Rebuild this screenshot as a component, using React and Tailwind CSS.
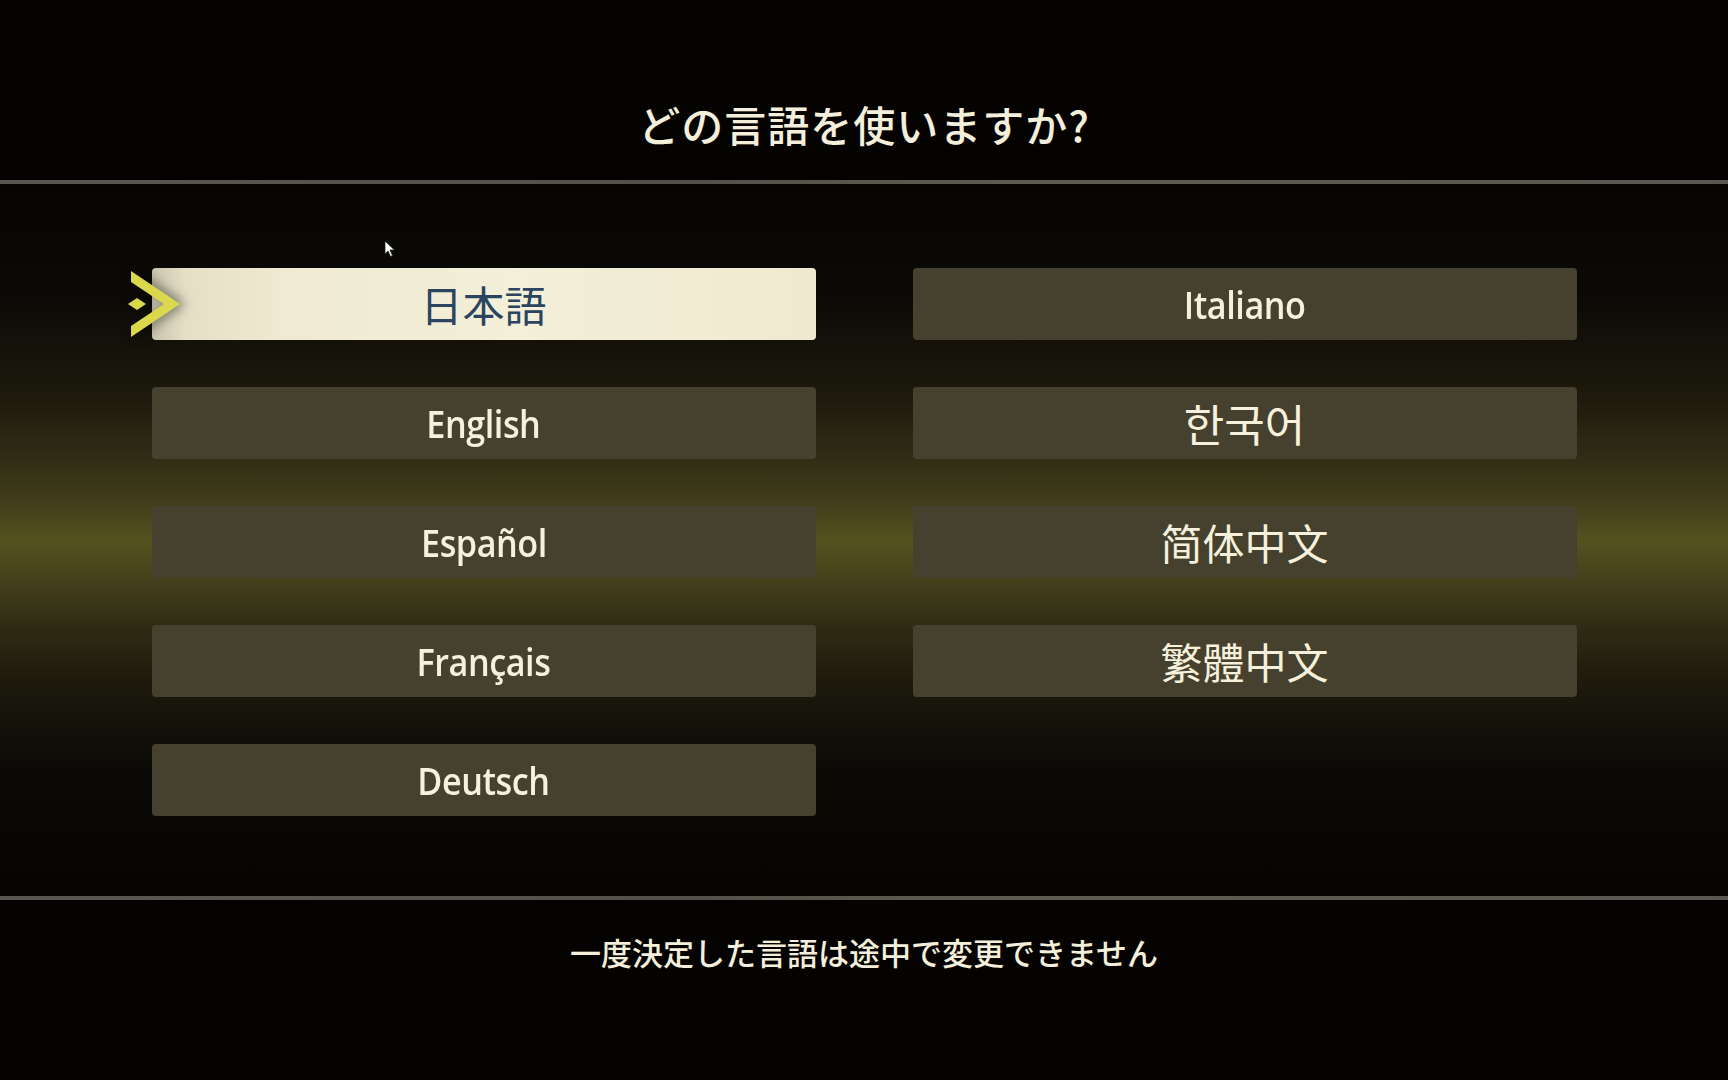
import React from 'react';

const left = [
  { label: '日本語', font: 'jp', selected: true },
  { label: 'English', font: 'latin' },
  { label: 'Español', font: 'latin' },
  { label: 'Français', font: 'latin' },
  { label: 'Deutsch', font: 'latin' },
];

const right = [
  { label: 'Italiano', font: 'latin' },
  { label: '한국어', font: 'kr' },
  { label: '简体中文', font: 'sc' },
  { label: '繁體中文', font: 'tc' },
];

const fontClass = {
  latin: "font-['Open_Sans',sans-serif] text-[38px] font-semibold tracking-[-0.5px] scale-x-[0.9]",
  jp: "font-['Noto_Sans_CJK_JP',sans-serif] text-[42px]",
  kr: "font-['Noto_Sans_CJK_KR',sans-serif] text-[44px]",
  sc: "font-['Noto_Sans_CJK_SC',sans-serif] text-[42px]",
  tc: "font-['Noto_Sans_CJK_TC',sans-serif] text-[42px]",
};

function Chevron() {
  return (
    <svg
      viewBox="0 0 56 70"
      className="absolute left-[-24px] top-[1px] w-[56px] h-[70px] drop-shadow-[5px_0_6px_rgba(0,0,0,0.5)]"
    >
      <path d="M3 2 L52 35 L3 68 L3 57 L36 35 L3 13 Z" fill="#dcd84c" />
      <path d="M0 35 L9 29 L18 35 L9 41 Z" fill="#dcd84c" />
    </svg>
  );
}

function LangButton({ item }) {
  if (item.selected) {
    return (
      <div className="relative h-[72px]">
        <div className="h-full rounded-[4px] bg-[linear-gradient(to_right,#c9c4ac_0%,#e4dfc5_5%,#efead1_20%,#f3efd8_55%,#efeacf_100%)] flex items-center justify-center">
          <span className={`${fontClass[item.font]} text-[#2b4460] leading-none`}>{item.label}</span>
        </div>
        <Chevron />
      </div>
    );
  }
  return (
    <div className="h-[72px] rounded-[4px] bg-[#46412e] flex items-center justify-center">
      <span className={`${fontClass[item.font]} text-[#f6f1dd] leading-none`}>{item.label}</span>
    </div>
  );
}

export default function App() {
  return (
    <div className="relative w-[1728px] h-[1080px] overflow-hidden bg-[#040302] flex flex-col text-[#f4efdb]">
      <div className="h-[180px] flex justify-center pt-[99px]">
        <h1 className="font-['Noto_Sans_CJK_JP',sans-serif] text-[42px] font-medium leading-[50px] tracking-[1px]">
          どの言語を使いますか?
        </h1>
      </div>
      <div className="h-[4px] bg-[linear-gradient(to_right,#5a5750,#54514a_40%,#5e5b53_60%,#5a5750)]" />

      <div className="flex-1 bg-[linear-gradient(to_bottom,#070504_0%,#0c0a06_16%,#1d1a0d_30%,#2f2c15_38%,#423e1b_45%,#56521f_50%,#433f1b_56%,#2c2913_63%,#1b180c_71%,#0c0a06_82%,#060403_100%)] flex justify-center pt-[84px]">
        <div className="grid grid-cols-[664px_664px] gap-x-[97px] items-start">
          <div className="flex flex-col gap-[47px]">
            {left.map((item) => (
              <LangButton key={item.label} item={item} />
            ))}
          </div>
          <div className="flex flex-col gap-[47px]">
            {right.map((item) => (
              <LangButton key={item.label} item={item} />
            ))}
          </div>
        </div>
      </div>

      <div className="h-[4px] bg-[linear-gradient(to_right,#5a5750,#54514a_40%,#5e5b53_60%,#5a5750)]" />
      <div className="h-[180px] flex justify-center pt-[30px]">
        <p className="font-['Noto_Sans_CJK_JP',sans-serif] text-[31px] font-medium leading-[44px]">
          一度決定した言語は途中で変更できません
        </p>
      </div>

      <svg viewBox="0 0 12 18" className="absolute left-[384px] top-[240px] w-[12px] h-[18px]">
        <path d="M1 1 L1 14 L4 11 L6.5 16.5 L8.5 15.5 L6 10 L10.5 10 Z" fill="#ffffff" stroke="#222" strokeWidth="0.8" />
      </svg>
    </div>
  );
}
